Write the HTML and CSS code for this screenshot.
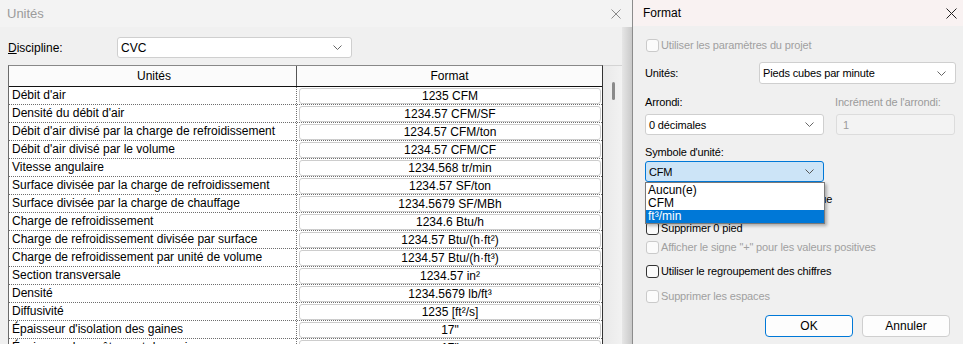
FILE: index.html
```html
<!DOCTYPE html>
<html lang="fr">
<head>
    <meta charset="UTF-8">
    <title>Unités - Format</title>
    <link rel="stylesheet" href="styles.css">
</head>
<body>
<div class="units-dlg">
    <div class="titlebar">
        <span class="title dim">Unités</span>
        <svg class="close" width="10" height="10" viewBox="0 0 10 10"><path d="M0.5 0.5 L9.5 9.5 M9.5 0.5 L0.5 9.5" stroke="#8a8a8a" stroke-width="1"/></svg>
    </div>
    <div class="units-main">
        <div class="units-content">
            <div class="discipline">
                <label class="disc-label"><u>D</u>iscipline:</label>
                <div class="select disc-select">
                    <span>CVC</span>
                    <svg width="9" height="5" viewBox="0 0 9 5"><path d="M0.5 0.5 L4.5 4.5 L8.5 0.5" fill="none" stroke="#666" stroke-width="1"/></svg>
                </div>
            </div>
            <div class="grid-wrap">
                <div class="grid">
                    <div class="grid-head">
                        <div class="hcell name">Unités</div>
                        <div class="hcell fmt">Format</div>
                    </div>
                    <div class="row"><div class="name">Débit d'air</div><div class="fmt"><span class="fbox">1235 CFM</span></div></div>
                    <div class="row"><div class="name">Densité du débit d'air</div><div class="fmt"><span class="fbox">1234.57 CFM/SF</span></div></div>
                    <div class="row"><div class="name">Débit d'air divisé par la charge de refroidissement</div><div class="fmt"><span class="fbox">1234.57 CFM/ton</span></div></div>
                    <div class="row"><div class="name">Débit d'air divisé par le volume</div><div class="fmt"><span class="fbox">1234.57 CFM/CF</span></div></div>
                    <div class="row"><div class="name">Vitesse angulaire</div><div class="fmt"><span class="fbox">1234.568 tr/min</span></div></div>
                    <div class="row"><div class="name">Surface divisée par la charge de refroidissement</div><div class="fmt"><span class="fbox">1234.57 SF/ton</span></div></div>
                    <div class="row"><div class="name">Surface divisée par la charge de chauffage</div><div class="fmt"><span class="fbox">1234.5679 SF/MBh</span></div></div>
                    <div class="row"><div class="name">Charge de refroidissement</div><div class="fmt"><span class="fbox">1234.6 Btu/h</span></div></div>
                    <div class="row"><div class="name">Charge de refroidissement divisée par surface</div><div class="fmt"><span class="fbox">1234.57 Btu/(h·ft²)</span></div></div>
                    <div class="row"><div class="name">Charge de refroidissement par unité de volume</div><div class="fmt"><span class="fbox">1234.57 Btu/(h·ft³)</span></div></div>
                    <div class="row"><div class="name">Section transversale</div><div class="fmt"><span class="fbox">1234.57 in²</span></div></div>
                    <div class="row"><div class="name">Densité</div><div class="fmt"><span class="fbox">1234.5679 lb/ft³</span></div></div>
                    <div class="row"><div class="name">Diffusivité</div><div class="fmt"><span class="fbox">1235 [ft²/s]</span></div></div>
                    <div class="row"><div class="name">Épaisseur d'isolation des gaines</div><div class="fmt"><span class="fbox">17"</span></div></div>
                    <div class="row"><div class="name">Épaisseur du revêtement des gaines</div><div class="fmt"><span class="fbox">17"</span></div></div>
                </div>
                <div class="vscroll"><div class="thumb"></div></div>
            </div>
        </div>
        <div class="shade"></div>
    </div>
</div>

<div class="format-dlg">
    <div class="titlebar pink">
        <span class="title small">Format</span>
        <svg class="close" width="11" height="11" viewBox="0 0 11 11"><path d="M0.5 0.5 L10.5 10.5 M10.5 0.5 L0.5 10.5" stroke="#222" stroke-width="1"/></svg>
    </div>
    <div class="format-body">
        <div class="check off first"><span class="box"></span>Utiliser les paramètres du projet</div>

        <div class="field-row">
            <label class="f-label">Unités:</label>
            <div class="select units-select">
                <span>Pieds cubes par minute</span>
                <svg width="9" height="5" viewBox="0 0 9 5"><path d="M0.5 0.5 L4.5 4.5 L8.5 0.5" fill="none" stroke="#666" stroke-width="1"/></svg>
            </div>
        </div>

        <div class="pair labels">
            <label class="col1">Arrondi:</label>
            <label class="col2 dim">Incrément de l'arrondi:</label>
        </div>
        <div class="pair inputs">
            <div class="select col1">
                <span>0 décimales</span>
                <svg width="9" height="5" viewBox="0 0 9 5"><path d="M0.5 0.5 L4.5 4.5 L8.5 0.5" fill="none" stroke="#666" stroke-width="1"/></svg>
            </div>
            <div class="input col2 disabled">1</div>
        </div>

        <label class="sym-label">Symbole d'unité:</label>
        <div class="sym-wrap">
            <div class="select focus">
                <span>CFM</span>
                <svg width="9" height="5" viewBox="0 0 9 5"><path d="M0.5 0.5 L4.5 4.5 L8.5 0.5" fill="none" stroke="#555" stroke-width="1"/></svg>
            </div>
            <ul class="droplist">
                <li>Aucun(e)</li>
                <li>CFM</li>
                <li class="sel">ft³/min</li>
            </ul>
        </div>

        <div class="check on c-trail"><span class="box"></span>Supprimer les 0 décimaux en queue</div>
        <div class="check on c-foot"><span class="box"></span>Supprimer 0 pied</div>
        <div class="check off c-plus"><span class="box"></span>Afficher le signe "+" pour les valeurs positives</div>
        <div class="check on c-group"><span class="box"></span>Utiliser le regroupement des chiffres</div>
        <div class="check off c-space"><span class="box"></span>Supprimer les espaces</div>

        <div class="buttons">
            <button class="btn default">OK</button>
            <button class="btn">Annuler</button>
        </div>
    </div>
</div>
</body>
</html>
```

FILE: styles.css
```css
body {
    margin: 0;
    width: 963px;
    height: 344px;
    overflow: hidden;
    display: flex;
    background: #f0f0f0;
    font-family: "Liberation Sans", Arial, sans-serif;
    font-size: 12px;
    color: #000;
}

/* ---- left dialog (Unités) ---- */
.units-dlg {
    width: 632px;
    flex: none;
    display: flex;
    flex-direction: column;
    background: #f0f0f0;
}

.titlebar {
    height: 27px;
    flex: none;
    display: flex;
    align-items: center;
    justify-content: space-between;
    padding: 0 11px 0 7px;
    background: #f3f3f3;
}

.title {
    font-size: 13px;
}

.title.small {
    font-size: 12px;
    padding-left: 3px;
}

.dim {
    color: #9b9b9b;
}

.units-main {
    flex: 1;
    display: flex;
}

.units-content {
    width: 614px;
    padding-left: 8px;
}

.discipline {
    display: flex;
    align-items: center;
    margin-top: 10px;
    height: 21px;
}

.disc-label {
    width: 109px;
}

.select {
    height: 21px;
    box-sizing: border-box;
    background: #fff;
    border: 1px solid #cfcfcf;
    border-radius: 3px;
    display: flex;
    align-items: center;
    justify-content: space-between;
    padding: 0 9px 0 3px;
}

.disc-select {
    width: 235px;
}

.grid-wrap {
    display: flex;
    margin-top: 7px;
}

.grid {
    width: 595px;
    box-sizing: border-box;
    border-left: 1px solid #6b6b6b;
    border-right: 1px solid #333;
    border-top: 1px solid #888;
    background: #fff;
}

.grid-head {
    display: flex;
    height: 20px;
    border-bottom: 1px solid #111;
    background: #fbfbfb;
}

.hcell {
    display: flex;
    align-items: center;
    justify-content: center;
}

.hcell.name {
    border-right: 1px solid #555;
}

.name {
    width: 288px;
    flex: none;
    box-sizing: border-box;
    padding-left: 3px;
}

.fmt {
    flex: 1;
}

.row {
    display: flex;
    height: 18px;
    box-sizing: border-box;
    border-bottom: 1px dotted #6e6e6e;
}

.row .name {
    border-right: 1px dotted #6e6e6e;
    line-height: 17px;
    white-space: nowrap;
    overflow: hidden;
}

.row .fmt {
    padding: 1px 1px 0 2px;
}

.fbox {
    display: block;
    height: 16px;
    box-sizing: border-box;
    border: 1px solid #cdcdcd;
    border-radius: 3px;
    background: #fff;
    text-align: center;
    line-height: 14px;
}

.vscroll {
    width: 19px;
    height: 290px;
    box-sizing: border-box;
    border-top: 1px solid #d4d4d4;
    background: linear-gradient(90deg, #e9e9e9, #f2f2f2);
    padding: 16px 0 0 9px;
}

.thumb {
    width: 3px;
    height: 18px;
    border-radius: 2px;
    background: #8a8a8a;
}

.shade {
    width: 10px;
    background: linear-gradient(90deg, #e6e6e6, #c9c9c9);
}

/* ---- right dialog (Format) ---- */
.format-dlg {
    width: 330px;
    flex: none;
    border-left: 1px solid #8c8c8c;
    display: flex;
    flex-direction: column;
    background: #f0f0f0;
}

.titlebar.pink {
    height: 26px;
    background: #f9f2f2;
    padding: 0 6px 0 7px;
}

.format-body {
    padding: 0 7px 0 12px;
    font-size: 11px;
    letter-spacing: -0.15px;
}

.check {
    display: flex;
    align-items: center;
    height: 14px;
    white-space: nowrap;
}

.check .box {
    width: 13px;
    height: 13px;
    box-sizing: border-box;
    border-radius: 3px;
    margin: 0 2px 0 1px;
    background: #fbfbfb;
}

.check.off {
    color: #a0a0a0;
}

.check.off .box {
    border: 1px solid #cacaca;
}

.check.on .box {
    border: 1px solid #333;
}

.check.first {
    margin-top: 12px;
}

.field-row {
    display: flex;
    align-items: center;
    margin-top: 10px;
}

.f-label {
    width: 114px;
}

.units-select {
    width: 197px;
    height: 22px;
}

.pair {
    display: flex;
    gap: 11px;
}

.pair .col1 {
    width: 179px;
    flex: none;
}

.labels {
    margin-top: 11px;
    height: 14px;
    align-items: center;
}

.inputs {
    margin-top: 5px;
}

.input {
    width: 119px;
    height: 21px;
    box-sizing: border-box;
    border: 1px solid #dcdcdc;
    border-radius: 3px;
    display: flex;
    align-items: center;
    padding-left: 6px;
}

.input.disabled {
    background: #f3f3f3;
    color: #9b9b9b;
    margin-left: 1px;
}

.sym-label {
    display: block;
    margin-top: 10px;
    height: 14px;
    line-height: 14px;
}

.sym-wrap {
    position: relative;
    width: 179px;
    margin-top: 2px;
}

.select.focus {
    background: #cce4f7;
    border-color: #0078d7;
}

.droplist {
    position: absolute;
    top: 21px;
    left: 0;
    width: 180px;
    box-sizing: border-box;
    margin: 0;
    padding: 1px 0 0;
    list-style: none;
    background: #fff;
    border: 1px solid #7a7a7a;
    box-shadow: 2px 2px 3px rgba(0, 0, 0, 0.28);
    z-index: 2;
    font-size: 12px;
    letter-spacing: 0;
}

.droplist li {
    height: 13px;
    line-height: 13px;
    padding-left: 2px;
}

.droplist li.sel {
    background: #0078d7;
    color: #fff;
}

.c-trail {
    margin-top: 10px;
}

.c-foot {
    margin-top: 15px;
}

.c-plus {
    margin-top: 5px;
}

.c-group {
    margin-top: 10px;
}

.c-space {
    margin-top: 11px;
}

.buttons {
    display: flex;
    justify-content: flex-end;
    gap: 9px;
    margin-top: 12px;
    padding-right: 6px;
}

.btn {
    width: 88px;
    height: 22px;
    font-family: "Liberation Sans", Arial, sans-serif;
    font-size: 12px;
    background: #fdfdfd;
    border: 1px solid #cfcfcf;
    border-radius: 4px;
    color: #000;
}

.btn.default {
    border-color: #0078d7;
}
```
